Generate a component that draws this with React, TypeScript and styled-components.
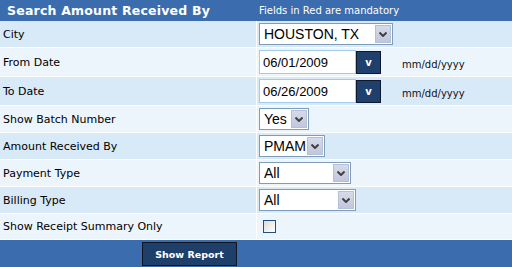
import React from "react";
import styled, { createGlobalStyle } from "styled-components";

const GlobalStyle = createGlobalStyle`
  html, body {
    margin: 0;
    padding: 0;
    background: #ffffff;
  }
  body {
    font-family: "DejaVu Sans", Verdana, sans-serif;
  }
`;

const Form = styled.div`
  width: 512px;
  height: 267px;
  display: grid;
  grid-template-columns: 256px 1fr;
  grid-template-rows: 20px 26px 28px 28px 26px 26px 26px 26px 25px 1fr;
  column-gap: 1px;
  row-gap: 1px;
  background: #ffffff;
  overflow: hidden;
`;

const Header = styled.div`
  grid-column: 1 / span 2;
  background: #3b6dae;
  color: #ffffff;
  display: grid;
  grid-template-columns: 257px 1fr;
  align-items: center;
  margin-bottom: -1px;
  white-space: nowrap;
`;

const Title = styled.span`
  padding-left: 7px;
  font-size: 12.5px;
  font-weight: bold;
  letter-spacing: 0.2px;
`;

const Note = styled.span`
  padding-left: 2px;
  font-size: 10px;
`;

const LabelCell = styled.div<{ $alt?: boolean }>`
  background: ${(p) => (p.$alt ? "#ecf4fc" : "#d8e9f7")};
  color: #000000;
  font-size: 11px;
  display: flex;
  align-items: center;
  padding-left: 3px;
  white-space: nowrap;
`;

const FieldCell = styled.div<{ $alt?: boolean }>`
  background: ${(p) => (p.$alt ? "#ecf4fc" : "#d8e9f7")};
  display: flex;
  align-items: center;
  padding-left: 2px;
`;

const SelectBox = styled.div<{ $w: number }>`
  width: ${(p) => p.$w}px;
  height: 22px;
  box-sizing: border-box;
  border: 1px solid #7f9db9;
  background: #ffffff;
  display: flex;
  align-items: center;
  padding: 1px;
  font-family: "Liberation Sans", Arial, sans-serif;
  font-size: 14px;
  color: #000000;
`;

const SelectText = styled.span`
  flex: 1;
  padding-left: 3px;
  white-space: nowrap;
  overflow: hidden;
`;

const ArrowBox = styled.div`
  width: 16px;
  height: 18px;
  box-sizing: border-box;
  border: 1px solid #b5bfd6;
  background: linear-gradient(#d6dbea, #c1c7dc);
  display: flex;
  align-items: center;
  justify-content: center;
`;

const DateInput = styled.div`
  width: 97px;
  height: 24px;
  box-sizing: border-box;
  border: 1px solid #a3cbee;
  background: #ffffff;
  display: flex;
  align-items: center;
  padding-left: 3px;
  font-family: "Liberation Sans", Arial, sans-serif;
  font-size: 13px;
  color: #000000;
`;

const CalButton = styled.div`
  width: 25px;
  height: 23px;
  box-sizing: border-box;
  border: 1px solid #0c1a2c;
  background: #1f3f6d;
  color: #ffffff;
  font-size: 10px;
  font-weight: bold;
  display: flex;
  align-items: center;
  justify-content: center;
`;

const Hint = styled.span`
  font-size: 10px;
  color: #111111;
  margin-left: 21px;
  padding-top: 5px;
`;

const CheckBox = styled.div`
  width: 13px;
  height: 13px;
  box-sizing: border-box;
  margin-left: 4px;
  border: 1px solid #1c5180;
  background: linear-gradient(135deg, #dcdcd7, #ffffff);
`;

const Footer = styled.div`
  grid-column: 1 / span 2;
  background: #3b6dae;
  padding: 2px 0 0 142px;
`;

const ReportButton = styled.button`
  width: 95px;
  height: 24px;
  box-sizing: border-box;
  border: 1px solid #0d1522;
  background: #1f3f6b;
  color: #ffffff;
  font-family: "DejaVu Sans", Verdana, sans-serif;
  font-size: 9.5px;
  font-weight: bold;
  padding: 0;
  cursor: pointer;
`;

const Chevron = () => (
  <svg width="8" height="5" viewBox="0 0 8 5">
    <path d="M0.5 0.5 L4 4 L7.5 0.5" fill="none" stroke="#404040" strokeWidth="2" />
  </svg>
);

const Select = ({ value, width }: { value: string; width: number }) => (
  <SelectBox $w={width}>
    <SelectText>{value}</SelectText>
    <ArrowBox>
      <Chevron />
    </ArrowBox>
  </SelectBox>
);

const DateField = ({ value }: { value: string }) => (
  <>
    <DateInput>{value}</DateInput>
    <CalButton>v</CalButton>
    <Hint>mm/dd/yyyy</Hint>
  </>
);

const App = () => {
  return (
    <>
      <GlobalStyle />
      <Form>
        <Header>
          <Title>Search Amount Received By</Title>
          <Note>Fields in Red are mandatory</Note>
        </Header>

        <LabelCell>City</LabelCell>
        <FieldCell>
          <Select value="HOUSTON, TX" width={134} />
        </FieldCell>

        <LabelCell $alt>From Date</LabelCell>
        <FieldCell $alt>
          <DateField value="06/01/2009" />
        </FieldCell>

        <LabelCell>To Date</LabelCell>
        <FieldCell>
          <DateField value="06/26/2009" />
        </FieldCell>

        <LabelCell $alt>Show Batch Number</LabelCell>
        <FieldCell $alt>
          <Select value="Yes" width={50} />
        </FieldCell>

        <LabelCell>Amount Received By</LabelCell>
        <FieldCell>
          <Select value="PMAM" width={66} />
        </FieldCell>

        <LabelCell $alt>Payment Type</LabelCell>
        <FieldCell $alt>
          <Select value="All" width={92} />
        </FieldCell>

        <LabelCell>Billing Type</LabelCell>
        <FieldCell>
          <Select value="All" width={97} />
        </FieldCell>

        <LabelCell $alt>Show Receipt Summary Only</LabelCell>
        <FieldCell $alt>
          <CheckBox />
        </FieldCell>

        <Footer>
          <ReportButton>Show Report</ReportButton>
        </Footer>
      </Form>
    </>
  );
};

export default App;
